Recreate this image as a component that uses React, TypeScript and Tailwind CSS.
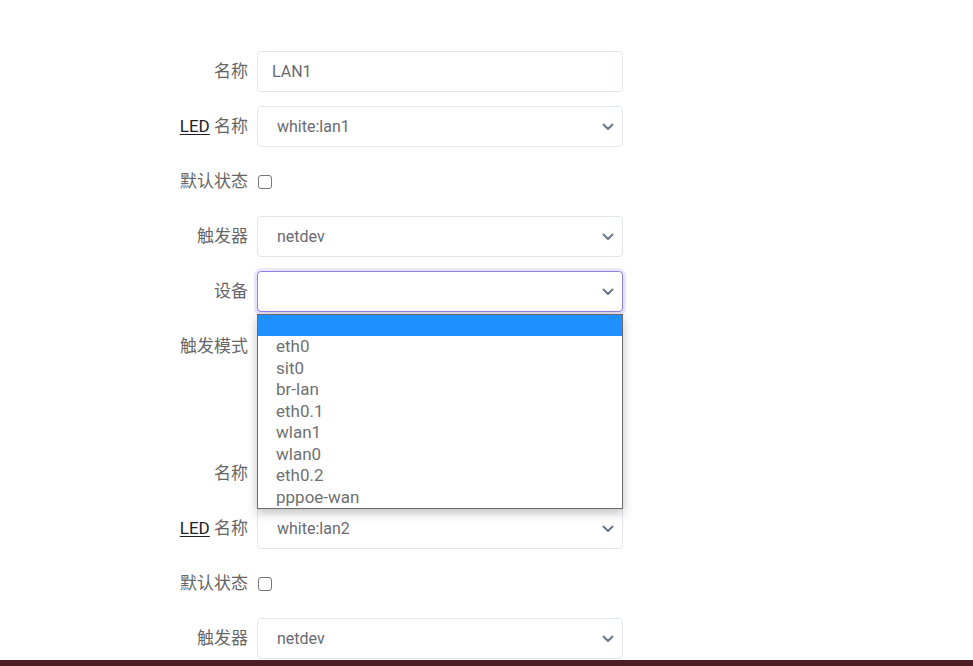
import React from 'react';

const font = { fontFamily: 'Roboto, "Noto Sans CJK SC", sans-serif' };

function Chevron() {
    return (
        <svg width="12" height="8" viewBox="0 0 12 8" className="absolute right-[8px] top-1/2 -translate-y-1/2">
            <path d="M1.5 1.5 L6 6 L10.5 1.5" fill="none" stroke="#6b7684" strokeWidth="2" strokeLinecap="round" strokeLinejoin="round" />
        </svg>
    );
}

function Row({ label, children, h = 'h-[41px]' }: { label: React.ReactNode; children?: React.ReactNode; h?: string }) {
    return (
        <div className={`flex items-start shrink-0 ${h}`}>
            <div className="w-[157px] h-[41px] flex items-center justify-end pr-[9px] text-[17px] text-[#666] whitespace-nowrap">
                {label}
            </div>
            <div className="w-[366px] h-[41px] flex items-center relative">{children}</div>
        </div>
    );
}

function TextBox({ value }: { value: string }) {
    return (
        <div className="w-full h-full border border-[#e3e6ea] rounded-[4px] bg-white flex items-center px-[14px] text-[16px] text-[#6a6a70]">
            {value}
        </div>
    );
}

function SelectBox({ value, focused }: { value: string; focused?: boolean }) {
    return (
        <div
            className={`w-full h-full rounded-[4px] bg-white flex items-center pl-[19px] text-[16px] text-[#6a6a70] relative ${
                focused ? 'border border-[#8f80ee] shadow-[0_0_0_3px_rgba(150,135,240,0.18),0_2px_4px_rgba(0,0,0,0.08)]' : 'border border-[#e3e6ea]'
            }`}
        >
            {value}
            <Chevron />
        </div>
    );
}

function CheckBox() {
    return <div className="w-[14px] h-[14px] ml-[1px] border border-[#767676] rounded-[3px] bg-white" />;
}

const LedLabel = (
    <span>
        <span className="underline underline-offset-2 text-[#222]">LED</span> 名称
    </span>
);

const devices = ['eth0', 'sit0', 'br-lan', 'eth0.1', 'wlan1', 'wlan0', 'eth0.2', 'pppoe-wan'];

export default function App() {
    return (
        <div className="w-[973px] h-[666px] overflow-hidden bg-white flex flex-col" style={font}>
            <div className="pt-[51px] pl-[100px] flex flex-col gap-[14px] shrink-0">
                <Row label="名称"><TextBox value="LAN1" /></Row>
                <Row label={LedLabel}><SelectBox value="white:lan1" /></Row>
                <Row label="默认状态"><CheckBox /></Row>
                <Row label="触发器"><SelectBox value="netdev" /></Row>
                <Row label="设备">
                    <SelectBox value="" focused />
                    {/* 下拉菜单 */}
                    <div className="absolute left-0 top-[43px] w-[366px] z-10 bg-white border border-[#6b6b6b] shadow-[0_4px_10px_rgba(0,0,0,0.25)] text-[17px] text-[#707070]">
                        <div className="h-[21px] bg-[#1e90ff]" />
                        {devices.map((d) => (
                            <div key={d} className="h-[21.5px] leading-[21.5px] pl-[18px]">{d}</div>
                        ))}
                    </div>
                </Row>
                <Row label="触发模式" h="h-[113px]" />
                <Row label="名称"><TextBox value="LAN2" /></Row>
                <Row label={LedLabel}><SelectBox value="white:lan2" /></Row>
                <Row label="默认状态"><CheckBox /></Row>
                <Row label="触发器"><SelectBox value="netdev" /></Row>
            </div>
            <div className="mt-[1px] h-[40px] bg-[#4a1e22] shrink-0 flex justify-end pr-[100px] pt-[3px] text-[13px] text-[#9a8a8c]">
                Powered by LuCI
            </div>
        </div>
    );
}
